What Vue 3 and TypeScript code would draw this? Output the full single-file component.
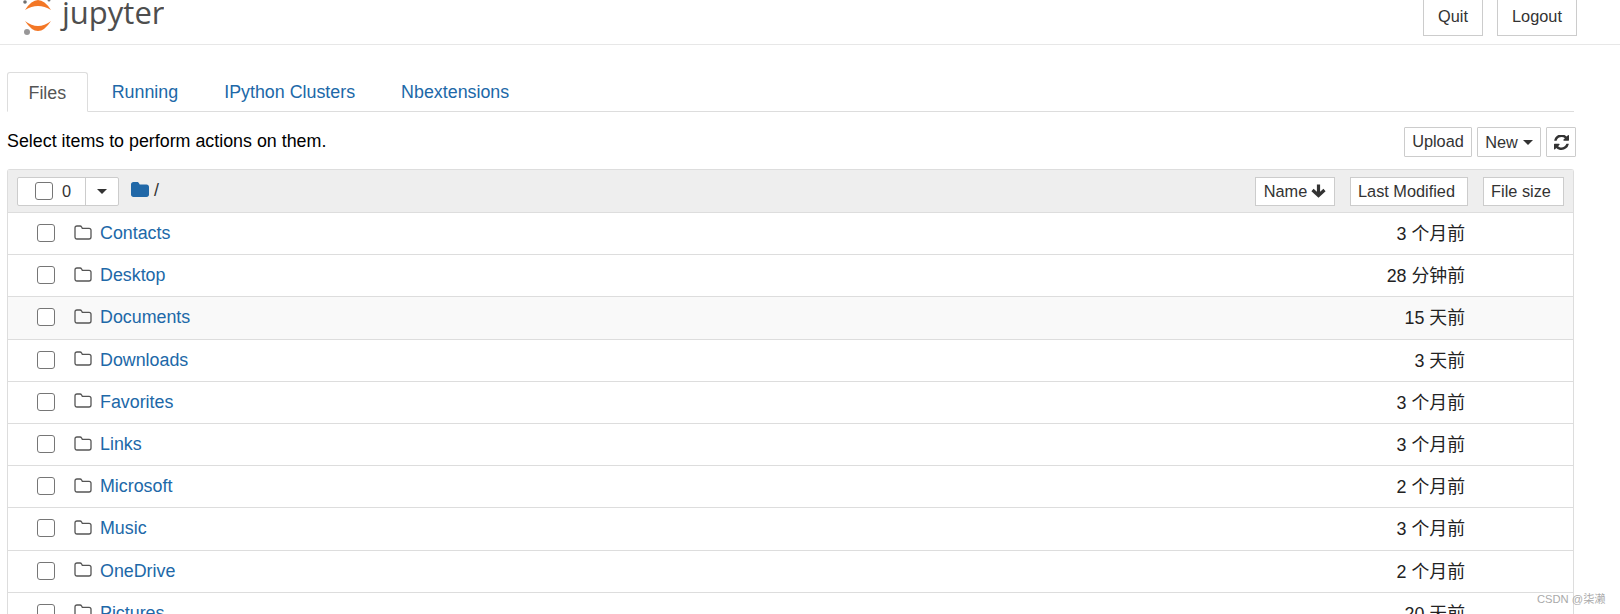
<script setup lang="ts">
interface Row { name: string; time: string; alt?: boolean }
const rows: Row[] = [
  { name: 'Contacts', time: '3 个月前' },
  { name: 'Desktop', time: '28 分钟前' },
  { name: 'Documents', time: '15 天前', alt: true },
  { name: 'Downloads', time: '3 天前' },
  { name: 'Favorites', time: '3 个月前' },
  { name: 'Links', time: '3 个月前' },
  { name: 'Microsoft', time: '2 个月前' },
  { name: 'Music', time: '3 个月前' },
  { name: 'OneDrive', time: '2 个月前' },
  { name: 'Pictures', time: '20 天前' },
]
const tabs = ['Running', 'IPython Clusters', 'Nbextensions']
</script>

<template>
  <div class="page">
    <header class="top">
      <div class="logo">
        <svg class="mark" width="34" height="38" viewBox="0 0 34 38">
          <path d="M4 10 Q17 -10 30 10 Q17 2 4 10 Z" fill="#f37726" />
          <path d="M4 21 Q17 41 30 21 Q17 31 4 21 Z" fill="#f37726" />
          <circle cx="6" cy="32" r="3" fill="#989798" />
          <circle cx="4" cy="2" r="1.800" fill="#6f7070" />
          <circle cx="28" cy="0" r="1.500" fill="#767677" />
        </svg>
        <span class="word">jupyter</span>
      </div>
      <div class="top-actions">
        <button class="btn tall quit">Quit</button>
        <button class="btn tall logout">Logout</button>
      </div>
    </header>

    <main class="main">
      <nav class="tabs">
        <a class="tab active">Files</a>
        <a v-for="t in tabs" :key="t" class="tab">{{ t }}</a>
      </nav>

      <div class="toolbar">
        <span class="hint">Select items to perform actions on them.</span>
        <div class="tools">
          <button class="btn small upload">Upload</button>
          <button class="btn small new">New <i class="caret"></i></button>
          <button class="btn small refresh" aria-label="Refresh">
            <svg width="15" height="15" viewBox="0 0 1536 1536">
              <path fill="#333" d="M1511 928q0 5-1 7-64 268-268 434.500t-478 166.500q-146 0-282.500-55t-243.500-157l-129 129q-19 19-45 19t-45-19-19-45v-448q0-26 19-45t45-19h448q26 0 45 19t19 45-19 45l-137 137q71 66 161 102t187 36q134 0 250-65t186-179q11-17 53-117 8-23 30-23h192q13 0 22.500 9.500t9.500 22.500zM1536 64v448q0 26-19 45t-45 19h-448q-26 0-45-19t-19-45 19-45l138-138q-148-137-349-137-134 0-250 65t-186 179q-11 17-53 117-8 23-30 23h-199q-13 0-22.500-9.500t-9.500-22.500v-7q65-268 270-434.500t480-166.500q146 0 284 55.500t245 156.500l130-129q19-19 45-19t45 19 19 45z" />
            </svg>
          </button>
        </div>
      </div>

      <section class="list">
        <div class="list-head">
          <div class="select">
            <span class="select-main"><i class="check"></i><span>0</span></span>
            <span class="select-drop"><i class="caret"></i></span>
          </div>
          <svg class="crumb-folder" width="18" height="15" viewBox="0 0 18 15">
            <path fill="#2068a8" d="M0 2.500C0 1 1 0 2.500 0H6c1 0 1.500.4 2 1.200L8.700 2.500H15.500C17 2.500 18 3.500 18 5v7.500c0 1.500-1 2.500-2.500 2.500h-13C1 15 0 14 0 12.500Z" />
          </svg>
          <span class="slash">/</span>
          <div class="sorts">
            <button class="btn head name">Name
              <svg width="15" height="14" viewBox="0 0 15 14">
                <path fill="none" stroke="#333" stroke-width="3.200" stroke-linejoin="miter" d="M7.500 0.500V10.500M1.500 6L7.500 11.500L13.500 6" />
              </svg>
            </button>
            <button class="btn head modified">Last Modified</button>
            <button class="btn head size">File size</button>
          </div>
        </div>
        <div v-for="r in rows" :key="r.name" class="row" :class="{ alt: r.alt }">
          <i class="check row-check"></i>
          <svg class="folder" width="18" height="15" viewBox="0 0 18 15">
            <path fill="none" stroke="#555" stroke-width="1.300" d="M1 3C1 1.800 1.700 1 3 1H6c.8 0 1.200.3 1.600 1L8.300 3.300H15c1.300 0 2 .8 2 2V12c0 1.300-.7 2-2 2H3c-1.300 0-2-.7-2-2Z" />
          </svg>
          <a class="name-link">{{ r.name }}</a>
          <span class="time">{{ r.time }}</span>
        </div>
      </section>
    </main>

    <div class="watermark">CSDN @柒濑</div>
  </div>
</template>

<style>
html, body { margin: 0; background: #fff; overflow: hidden; }
</style>

<style scoped>
.page {
  position: relative;
  height: 614px;
  overflow: hidden;
  font-family: "Liberation Sans", Arial, "Noto Sans CJK SC", sans-serif;
  font-size: 17.850px;
  color: #000;
}
.top {
  height: 44px;
  display: flex;
  justify-content: space-between;
  align-items: flex-end;
  border-bottom: 1px solid #e7e7e7;
  box-sizing: content-box;
}
.logo {
  display: flex;
  align-items: flex-start;
  height: 44px;
  overflow: hidden;
  padding-left: 21px;
  gap: 7px;
}
.mark { flex: none; }
.word {
  font-family: "Open Sans", "Noto Sans", sans-serif;
  font-size: 31px;
  line-height: 30px;
  letter-spacing: 0;
  color: #4e4e4e;
  margin-top: -3px;
}
.top-actions {
  display: flex;
  gap: 14px;
  padding-right: 43px;
  padding-bottom: 8px;
  align-items: flex-end;
}
.btn {
  font: inherit;
  font-size: 16.320px;
  background: #fff;
  color: #333;
  border: 1px solid #ccc;
  padding: 0;
  box-sizing: border-box;
  display: inline-flex;
  align-items: center;
  justify-content: center;
}
.tall { height: 50px; padding-top: 10px; }
.quit { width: 60px; }
.logout { width: 80px; }
.main { padding: 0 46px 0 7px; }
.tabs {
  margin-top: 27px;
  height: 39px;
  display: flex;
  border-bottom: 1px solid #ddd;
}
.tab {
  height: 39px;
  padding: 2px 23px 0;
  box-sizing: border-box;
  display: flex;
  align-items: center;
  color: #2068a8;
}
.tab.active {
  height: 40px;
  padding: 2px 20.500px 0;
  margin-right: 1px;
  color: #555;
  background: #fff;
  border: 1px solid #ddd;
  border-bottom-color: transparent;
  border-radius: 3px 3px 0 0;
}
.toolbar {
  display: flex;
  justify-content: space-between;
  align-items: center;
  height: 30px;
  margin-top: 15px;
}
.hint { margin-top: -1px; }
.tools { display: flex; gap: 5px; margin-right: -2px; }
.small { height: 30px; border-radius: 1px; }
.upload { width: 68px; padding-bottom: 1px; }
.new { width: 64px; gap: 5px; }
.refresh { width: 30px; }
.caret {
  display: inline-block;
  width: 0;
  height: 0;
  border-top: 5px solid #333;
  border-left: 5px solid transparent;
  border-right: 5px solid transparent;
}
.list {
  margin-top: 12px;
  border: 1px solid #ddd;
  border-top-left-radius: 3px;
  border-top-right-radius: 3px;
  border-bottom: none;
}
.list-head {
  height: 42px;
  background: #eee;
  display: flex;
  align-items: center;
  padding: 0 9px;
  border-bottom: 1px solid #ddd;
  box-sizing: content-box;
}
.select {
  display: flex;
  width: 102px;
  height: 29px;
  background: #fff;
  border: 1px solid #ccc;
  border-radius: 2px;
  box-sizing: border-box;
  color: #333;
  font-size: 16.320px;
}
.select-main {
  width: 68px;
  display: flex;
  align-items: center;
  padding-left: 17px;
  gap: 9px;
  box-sizing: border-box;
  border-right: 1px solid #ccc;
}
.select-drop {
  flex: 1;
  display: flex;
  align-items: center;
  justify-content: center;
}
.check {
  display: block;
  flex: none;
  width: 18px;
  height: 18px;
  box-sizing: border-box;
  border: 1.500px solid #767676;
  border-radius: 3px;
  background: #fff;
}
.row-check { margin-top: -1px; }
.crumb-folder { margin-left: 12px; margin-top: -3px; }
.slash { margin-left: 5px; margin-top: -2px; color: #333; }
.sorts { margin-left: auto; display: flex; }
.head { height: 29px; }
.head.name { width: 80px; gap: 4px; margin-right: 15px; }
.head.modified { width: 118px; margin-right: 15px; padding-right: 5px; }
.head.size { width: 81px; padding-right: 5px; }
.row {
  position: relative;
  height: 42.200px;
  box-sizing: border-box;
  display: flex;
  align-items: center;
  padding-left: 29px;
  border-bottom: 1px solid #ddd;
}
.row.alt { background: #f9f9f9; }
.folder { margin-left: 19px; margin-top: -3px; }
.name-link { margin-left: 8px; color: #2068a8; margin-top: 0; }
.time { margin-left: auto; margin-right: 108px; margin-top: -3px; color: #222; }
.watermark {
  position: absolute;
  left: 1537px;
  top: 592px;
  font-size: 11.200px;
  line-height: 14px;
  color: #aaa;
  white-space: nowrap;
}
</style>
